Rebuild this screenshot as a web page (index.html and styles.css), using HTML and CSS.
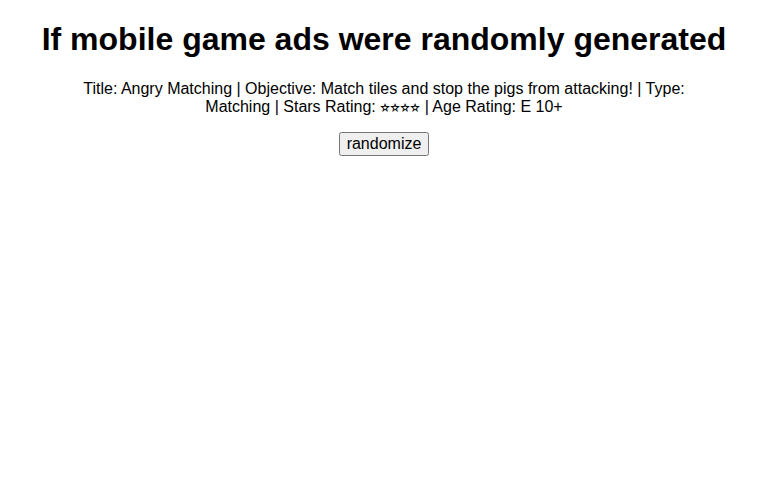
FILE: index.html
```html
<!DOCTYPE html>
<html>
<head>
<meta charset="utf-8">
<title>Mobile Game Ad Generator</title>
<link rel="stylesheet" href="styles.css">
</head>
<body>
<main class="page">
  <h1 class="title">If mobile game ads were randomly generated</h1>
  <p class="ad">Title: Angry Matching | Objective: Match tiles and stop the pigs from attacking! | Type: Matching | Stars Rating: <span class="stars">⭐︎⭐︎⭐︎⭐︎</span> | Age Rating: E 10+</p>
  <button class="randomize" type="button">randomize</button>
</main>
</body>
</html>
```

FILE: styles.css
```css
body {
  margin: 0;
  font-family: "Liberation Sans", Arial, sans-serif;
  color: #000;
  background: #fff;
}

.page {
  display: flex;
  flex-direction: column;
  align-items: center;
  text-align: center;
}

.title {
  font-size: 32px;
  font-weight: bold;
  margin: 21px 0;
}

.ad {
  max-width: 620px;
  font-size: 16px;
  line-height: 18px;
  margin: 1px 0 16px;
}

.stars {
  font-family: "DejaVu Sans", sans-serif;
  font-size: 14.5px;
  line-height: 1;
}

.randomize {
  font-family: "Liberation Sans", Arial, sans-serif;
  font-size: 16px;
}
```
